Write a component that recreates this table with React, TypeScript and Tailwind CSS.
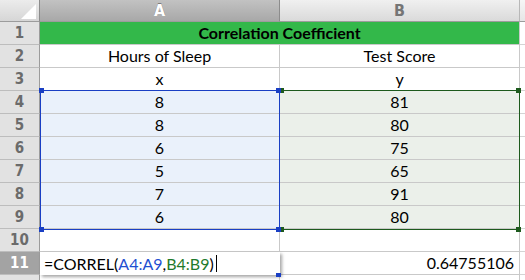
const rows = [
  { n: 2, a: 'Hours of Sleep', b: 'Test Score' },
  { n: 3, a: 'x', b: 'y' },
  { n: 4, a: '8', b: '81' },
  { n: 5, a: '8', b: '80' },
  { n: 6, a: '6', b: '75' },
  { n: 7, a: '5', b: '65' },
  { n: 8, a: '7', b: '91' },
  { n: 9, a: '6', b: '80' },
  { n: 10, a: '', b: '' },
]

const cellFont = { fontFamily: 'Lato, "Open Sans", sans-serif' }
const headFont = { fontFamily: '"DejaVu Sans Condensed", "DejaVu Sans", Verdana, sans-serif' }

function RowHead({ n, active }: { n: number | string; active?: boolean }) {
  return (
    <div
      style={headFont}
      className={
        'flex h-[23px] items-center justify-center border-b border-r border-b-[#bdbdbd] border-r-[#9c9c9c] text-[15px] font-bold ' +
        (active ? 'bg-[#a3a3a3] text-white' : 'bg-[#e2e2e2] text-[#6b6b6b]')
      }
    >
      {n}
    </div>
  )
}

export default function App() {
  return (
    <div className="relative h-[280px] w-[525px] overflow-hidden bg-white" style={cellFont}>
      <div className="grid grid-cols-[40px_240px_240px_1fr]">
        {/* column headers */}
        <div className="relative h-[22px] border-b border-r border-b-[#9c9c9c] border-r-[#8c8c8c] bg-gradient-to-b from-[#ececec] to-[#d6d6d6]">
          <svg className="absolute bottom-[2px] right-[3px]" width="15" height="15" viewBox="0 0 15 15">
            <polygon points="15,0 15,15 0,15" fill="#ffffff" />
          </svg>
        </div>
        <div
          style={headFont}
          className="flex h-[22px] items-center justify-center border-b border-r border-b-[#9c9c9c] border-r-[#8c8c8c] bg-gradient-to-b from-[#c2c2c2] to-[#a8a8a8] text-[16px] font-bold text-white [text-shadow:0_-1px_0_rgba(0,0,0,0.35)]"
        >
          A
        </div>
        <div
          style={headFont}
          className="flex h-[22px] items-center justify-center border-b border-r border-b-[#9c9c9c] border-r-[#b8b8b8] bg-gradient-to-b from-[#f0f0f0] to-[#dadada] text-[16px] font-bold text-[#757575]"
        >
          B
        </div>
        <div className="h-[22px] border-b border-b-[#9c9c9c] bg-gradient-to-b from-[#f6f6f6] to-[#e6e6e6]" />

        {/* row 1 */}
        <RowHead n={1} />
        <div className="col-span-2 flex h-[23px] items-center justify-center border-b border-r border-[#c9c9c9] bg-[#33b84a] text-[16px] font-bold text-black">
          Correlation Coefficient
        </div>
        <div className="h-[23px] border-b border-[#d4d4d4]" />

        {rows.map((r) => {
          const sel = r.n >= 4 && r.n <= 9
          return [
            <RowHead key={`h${r.n}`} n={r.n} />,
            <div
              key={`a${r.n}`}
              className={
                'flex h-[23px] items-center justify-center border-b border-r border-[#c9c9c9] text-[16px] text-black ' +
                (sel ? 'bg-[#eaf1fb]' : 'bg-white')
              }
            >
              {r.a}
            </div>,
            <div
              key={`b${r.n}`}
              className={
                'flex h-[23px] items-center justify-center border-b border-r border-[#c9c9c9] text-[16px] text-black ' +
                (sel ? 'bg-[#ebf0ea]' : 'bg-white')
              }
            >
              {r.b}
            </div>,
            <div key={`c${r.n}`} className="h-[23px] border-b border-[#d4d4d4]" />,
          ]
        })}

        {/* row 11 */}
        <RowHead n={11} active />
        <div className="relative z-10 flex h-[23px] items-center bg-white pl-[4px] text-[16px] text-black shadow-[2px_2px_3px_rgba(0,0,0,0.35)]">
          <span>=CORREL(</span>
          <span className="text-[#1f4fd1]">A4:A9</span>
          <span>,</span>
          <span className="text-[#1e7a2c]">B4:B9</span>
          <span>)</span>
          <span className="ml-[2px] h-[17px] w-px bg-black" />
        </div>
        <div className="flex h-[23px] items-center justify-end border-b border-r border-[#c9c9c9] pr-[5px] text-[16px] text-black">
          0.64755106
        </div>
        <div className="h-[23px] border-b border-[#d4d4d4]" />

        {/* row 12 (partial) */}
        <RowHead n="" />
        <div className="h-[23px] border-b border-r border-[#c9c9c9]" />
        <div className="h-[23px] border-b border-r border-[#c9c9c9]" />
        <div className="h-[23px] border-b border-[#d4d4d4]" />
      </div>

      {/* selection overlays */}
      <div className="pointer-events-none absolute left-[279px] top-[90px] h-[140px] w-[241px] border-[1.5px] border-[#1d5a1d]" />
      <div className="pointer-events-none absolute left-[40px] top-[90px] h-[140px] w-[240px] border-[1.5px] border-[#1a3fc4]" />
      <div className="absolute left-[39px] top-[88px] h-[5px] w-[5px] bg-[#1a3fc4]" />
      <div className="absolute left-[276px] top-[88px] h-[5px] w-[5px] bg-[#1a3fc4]" />
      <div className="absolute left-[281px] top-[88px] h-[5px] w-[3px] bg-[#1d5a1d]" />
      <div className="absolute left-[39px] top-[227px] h-[5px] w-[5px] bg-[#1a3fc4]" />
      <div className="absolute left-[276px] top-[227px] h-[5px] w-[5px] bg-[#1a3fc4]" />
      <div className="absolute left-[281px] top-[227px] h-[5px] w-[3px] bg-[#1d5a1d]" />
      <div className="absolute left-[516px] top-[88px] h-[5px] w-[5px] bg-[#1d5a1d]" />
      <div className="absolute left-[516px] top-[227px] h-[5px] w-[5px] bg-[#1d5a1d]" />
      <div className="absolute left-[276px] top-[273px] z-20 h-[4px] w-[5px] bg-[#1a3fc4]" />
    </div>
  )
}
